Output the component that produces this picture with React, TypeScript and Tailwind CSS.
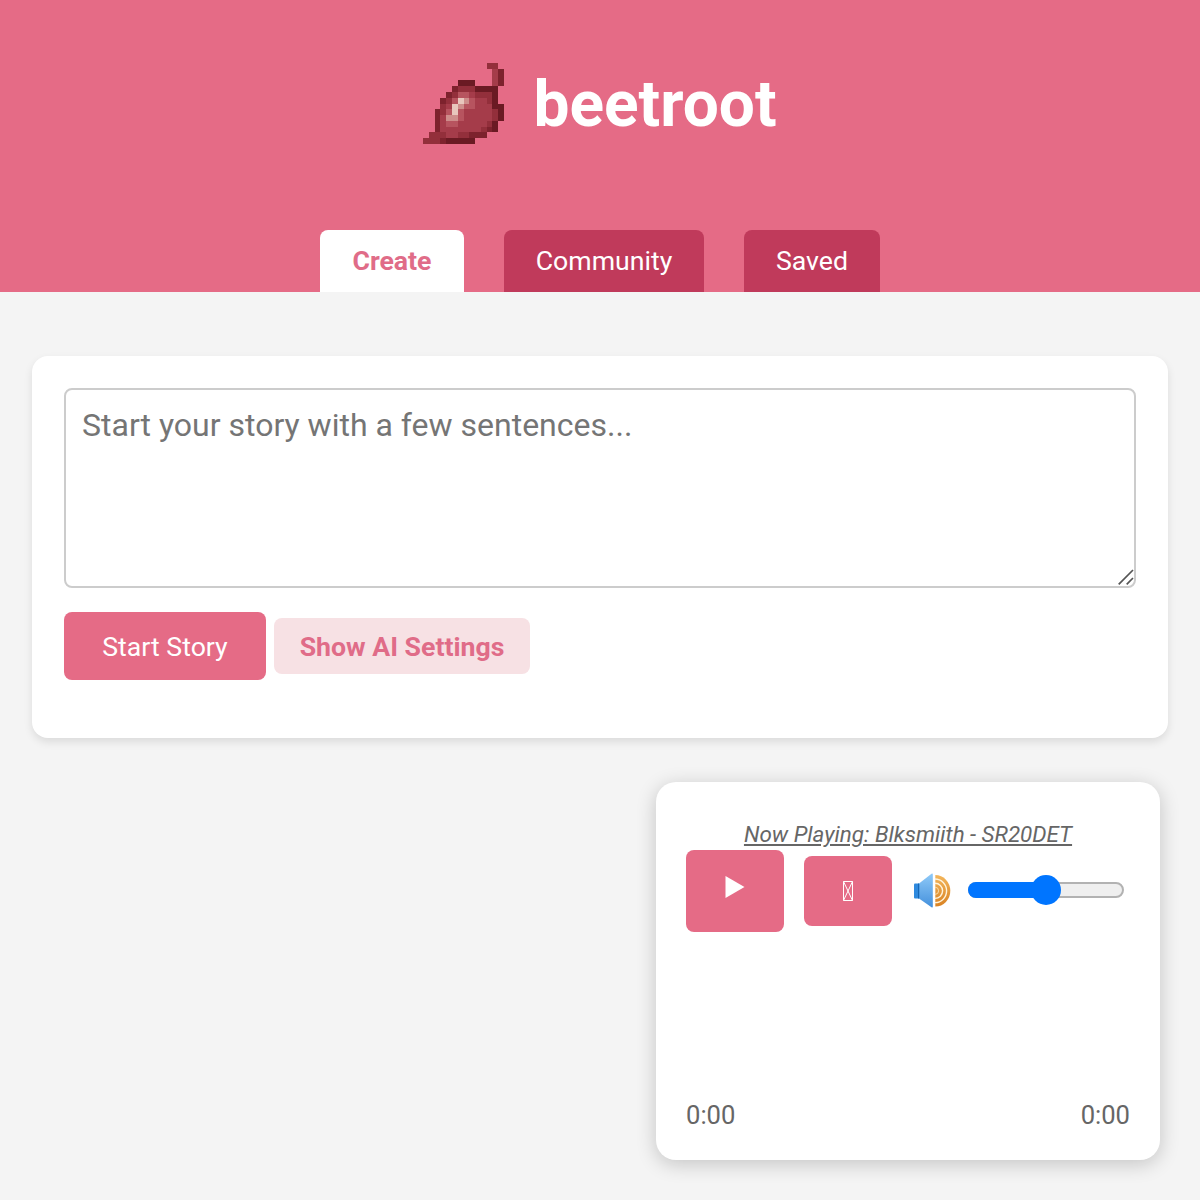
const ROWS = [
  "...........RR.",
  "............PM",
  "............PM",
  "......DDD...PM",
  ".....MRRRDDDD.",
  "....MRLLPRRRD.",
  "...MRLWHLPPRD.",
  "...RPWHLLPPPDD",
  "..MRLWLPPPPPRD",
  "..MPHHLPPPPPRD",
  "..MPLLPPPPPRD.",
  "..MPPPPPPPRMD.",
  ".RRRPPRRMMM...",
  "RRRMDDDDD.....",
];

const COLORS: Record<string, string> = {
  D: "#6a1a23",
  M: "#7d222d",
  R: "#932f3b",
  P: "#a53c4a",
  L: "#b7545f",
  H: "#ce8d8b",
  W: "#e8c6bd",
};

function Beet() {
  return (
    <svg viewBox="0 0 14 14" className="h-[81px] w-[81px]" shapeRendering="crispEdges">
      {ROWS.flatMap((row, y) =>
        [...row].map((c, x) =>
          c === "." ? null : <rect key={`${x}-${y}`} x={x} y={y} width="1" height="1" fill={COLORS[c]} />
        )
      )}
    </svg>
  );
}

function Speaker() {
  return (
    <svg viewBox="0 0 38 38" className="h-[38px] w-[38px]" fill="none">
      <defs>
        <linearGradient id="cone" x1="0" y1="0" x2="0" y2="1">
          <stop offset="0" stopColor="#8fcaf8" />
          <stop offset="1" stopColor="#4490dc" />
        </linearGradient>
        <linearGradient id="wave" x1="0" y1="0" x2="0" y2="1">
          <stop offset="0" stopColor="#f3b65c" />
          <stop offset="1" stopColor="#d98222" />
        </linearGradient>
      </defs>
      <path d="M6 11.5 18.5 1.8Q19.8 1 19.8 2.5V34.5Q19.8 36 18.5 35.2L6 26.5Z" fill="url(#cone)" />
      <rect x="1" y="11.5" width="5.5" height="15" rx="1" fill="#2f8ade" />
      <path d="M5.5 11.5v15" stroke="#1767b5" />
      <path d="M22.3 3A15 15.8 0 0 1 22.3 34.6Z" fill="url(#wave)" />
      <path d="M22 7a11.6 11.8 0 0 1 0 23.6M22 11.2a7.6 7.6 0 0 1 0 15.2" stroke="#fff4dc" strokeWidth="1.4" />
      <path d="M22 15.2a3.6 3.6 0 0 1 0 7.2" stroke="#f9dcab" />
    </svg>
  );
}

export default function App() {
  return (
    <div className="flex h-[1200px] w-[1200px] flex-col overflow-hidden bg-[#f4f4f4] font-['Roboto',sans-serif]">
      <header className="flex h-[292px] shrink-0 flex-col items-center justify-between bg-[#e56b86]">
        <div className="mt-[63px] flex items-start gap-[29px]">
          <Beet />
          <h1 className="mt-px text-[64px] leading-[82px] font-bold text-white">beetroot</h1>
        </div>
        <nav className="flex gap-10 text-[26.667px] leading-[62px] text-white">
          <button className="h-[62px] w-36 rounded-t-lg bg-white font-bold text-[#e06c88]">Create</button>
          <button className="h-[62px] w-[200px] rounded-t-lg bg-[#c03a5b]">Community</button>
          <button className="h-[62px] w-[136px] rounded-t-lg bg-[#c03a5b]">Saved</button>
        </nav>
      </header>

      <main className="mx-8 mt-16 h-[382px] shrink-0 rounded-2xl bg-white p-8 shadow-[0_4px_8px_rgba(0,0,0,0.1)]">
        <div className="relative h-[200px]">
          <textarea
            className="block h-full w-full resize-none rounded-lg border-2 border-[#ccc] bg-white px-4 py-4 text-[32px] leading-[38px] outline-none placeholder:text-[#757575]"
            placeholder="Start your story with a few sentences..."
          />
          <svg viewBox="0 0 16 16" className="absolute right-[2px] bottom-[3px] h-4 w-4" fill="none" stroke="#555" strokeWidth="1.7">
            <path d="M.7 15.3 15 1M8.7 15.3 15 9" />
          </svg>
        </div>
        <div className="mt-6 flex items-center gap-2 text-[26.667px]">
          <button className="h-[68px] w-[202px] rounded-lg bg-[#e56b86] pt-0.5 text-white">Start Story</button>
          <button className="h-14 w-64 rounded-lg bg-[#f7e1e4] pt-0.5 font-bold text-[#e06c88]">Show AI Settings</button>
        </div>
      </main>

      <section className="mt-11 mr-10 flex h-[378px] w-[504px] shrink-0 flex-col self-end rounded-[20px] bg-white px-[30px] pt-10 text-[#666] shadow-[0_4px_20px_rgba(0,0,0,0.2)]">
        <a className="block h-7 text-center text-[22.4px] leading-[24px] italic underline">Now Playing: Blksmiith - SR20DET</a>
        <div className="flex h-[82px] items-center">
          <button className="flex h-[82px] w-[98px] justify-center rounded-lg bg-[#e56b86] pt-[26px]">
            <svg viewBox="0 0 20 22" className="mr-px h-[22px] w-5" fill="white">
              <path d="M.5 0 19.5 11 .5 22Z" />
            </svg>
          </button>
          <button className="ml-5 flex h-[70px] w-[88px] items-center justify-center rounded-lg bg-[#e56b86]">
            <svg viewBox="0 0 10 20" className="mr-px h-5 w-[10px]" fill="none" stroke="white" strokeWidth="1">
              <path d="M.5.5h9v19h-9ZM.5.5l9 19M9.5.5l-9 19" />
            </svg>
          </button>
          <div className="ml-[21px]">
            <Speaker />
          </div>
          <div className="relative mb-0.5 ml-[17px] h-4 w-[156px] rounded-full border-2 border-[#b2b2b2] bg-[#efefef]">
            <div className="absolute -top-[2px] -left-[2px] h-4 w-[78px] rounded-l-full bg-[#0075ff]" />
            <div className="absolute -top-[9px] left-[61px] h-[30px] w-[30px] rounded-full bg-[#0075ff]" />
          </div>
        </div>
        <div className="mt-[168px] flex justify-between text-[25.6px] leading-[30px]">
          <span>0:00</span>
          <span>0:00</span>
        </div>
      </section>
    </div>
  );
}
